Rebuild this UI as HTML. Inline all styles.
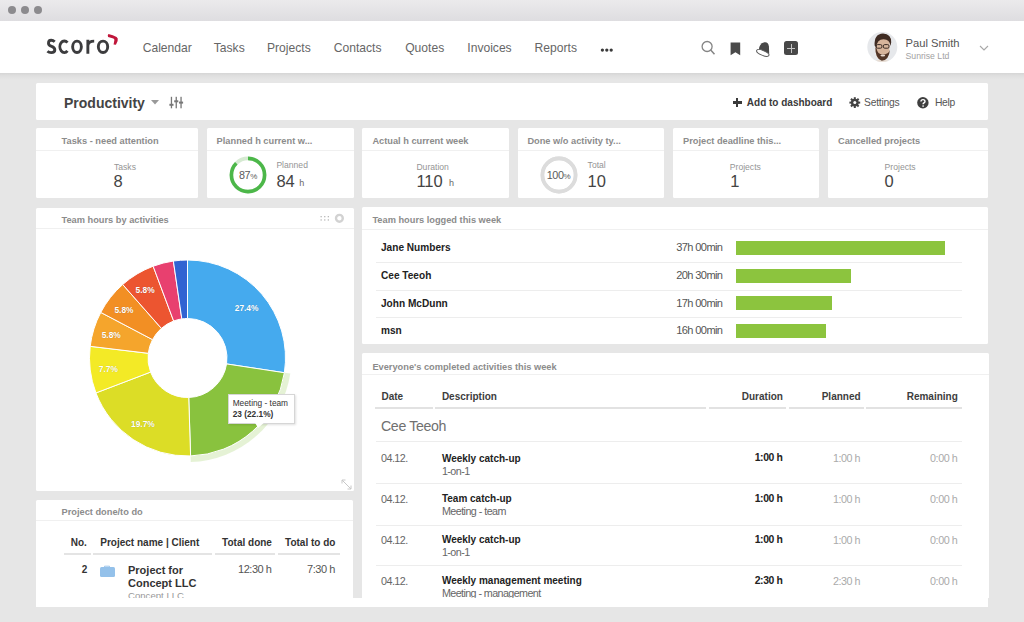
<!DOCTYPE html>
<html><head><meta charset="utf-8"><style>
html,body{margin:0;padding:0;}
body{width:1024px;height:622px;overflow:hidden;background:#e6e6e6;position:relative;font-family:"Liberation Sans",sans-serif;}
.t{position:absolute;white-space:nowrap;}
#clip{position:absolute;left:0;top:0;width:1024px;height:598px;overflow:hidden;}
</style></head><body>
<div id="clip">
<div style="position:absolute;left:0px;top:0px;width:1024px;height:21px;background:linear-gradient(#ebeaec,#dedde0);"></div>
<div style="position:absolute;left:8px;top:6px;width:8px;height:8px;background:#8c8b8e;border-radius:50%;"></div>
<div style="position:absolute;left:21px;top:6px;width:8px;height:8px;background:#8c8b8e;border-radius:50%;"></div>
<div style="position:absolute;left:34px;top:6px;width:8px;height:8px;background:#8c8b8e;border-radius:50%;"></div>
<div style="position:absolute;left:0px;top:21px;width:1024px;height:52px;background:#fff;"></div>
<div style="position:absolute;left:0px;top:73px;width:1024px;height:7px;background:linear-gradient(rgba(0,0,0,0.075),rgba(0,0,0,0.03) 40%,rgba(0,0,0,0));"></div>
<svg style="position:absolute;left:42px;top:30px" width="80" height="30" viewBox="0 0 1024 384"><g fill="none" stroke="#3c3c3e" stroke-width="37">
<path d="M163 150 Q142 131 118 131 Q83 131 83 168 Q83 197 123 210 Q164 223 164 257 Q164 290 118 290 Q89 290 70 272"/>
<path d="M326 162 A57 74 0 1 0 326 268"/>
<ellipse cx="448" cy="215" rx="56" ry="73"/>
<path d="M587 305 V125 M587 200 Q595 142 668 142"/>
<ellipse cx="781" cy="215" rx="60" ry="73"/>
</g><path d="M850 50 Q910 62 955 88 Q978 102 968 140 L946 188 L916 184 L926 132 Q930 118 913 110 L846 88 Q835 70 850 50 Z" fill="#c0163a"/></svg>
<div class="t" style="left:142.7px;top:41.96px;font-size:12.10px;line-height:12.10px;font-weight:400;color:#666;">Calendar</div>
<div class="t" style="left:213.8px;top:41.96px;font-size:12.10px;line-height:12.10px;font-weight:400;color:#666;">Tasks</div>
<div class="t" style="left:267.0px;top:41.96px;font-size:12.10px;line-height:12.10px;font-weight:400;color:#666;">Projects</div>
<div class="t" style="left:333.8px;top:41.96px;font-size:12.10px;line-height:12.10px;font-weight:400;color:#666;">Contacts</div>
<div class="t" style="left:405.2px;top:41.96px;font-size:12.10px;line-height:12.10px;font-weight:400;color:#666;">Quotes</div>
<div class="t" style="left:467.3px;top:41.96px;font-size:12.10px;line-height:12.10px;font-weight:400;color:#666;">Invoices</div>
<div class="t" style="left:534.6px;top:41.96px;font-size:12.10px;line-height:12.10px;font-weight:400;color:#666;">Reports</div>
<svg style="position:absolute;left:598px;top:45px" width="18" height="10" viewBox="0 0 18 10"><g fill="#3a3a3a"><circle cx="4.4" cy="5.1" r="1.65"/><circle cx="8.8" cy="5.1" r="1.65"/><circle cx="13.2" cy="5.1" r="1.65"/></g></svg>
<svg style="position:absolute;left:700px;top:39px" width="18" height="18" viewBox="0 0 18 18"><circle cx="7.1" cy="7.5" r="5" fill="none" stroke="#858585" stroke-width="1.3"/><line x1="10.7" y1="11.1" x2="14.5" y2="15.3" stroke="#858585" stroke-width="1.5"/></svg>
<svg style="position:absolute;left:730px;top:42px" width="11" height="14" viewBox="0 0 11 14"><path d="M0.6 0.6 H10.2 V13.2 L5.4 10.2 L0.6 13.2 Z" fill="#4a4a4a"/></svg>
<svg style="position:absolute;left:755px;top:40px" width="17" height="18" viewBox="0 0 17 18"><path d="M3.8 10 Q4.2 3.6 9.4 2.2 Q13.2 1.6 13.9 6.2 L14.2 13.6 Z" fill="#474747"/><ellipse cx="7.8" cy="12.9" rx="6.6" ry="2.4" transform="rotate(22 7.8 12.9)" fill="#fff" stroke="#5a5a5a" stroke-width="1"/></svg>
<div style="position:absolute;left:784.2px;top:41.4px;width:13.7px;height:13.6px;background:#484848;border-radius:2.5px;"></div>
<div style="position:absolute;left:786.9px;top:47.8px;width:8.1px;height:1.1px;background:#c4c4c4;"></div>
<div style="position:absolute;left:790.5px;top:44.2px;width:1.1px;height:8.4px;background:#c4c4c4;"></div>
<svg style="position:absolute;left:867px;top:32px" width="31" height="31" viewBox="0 0 31 31">
<defs><clipPath id="av"><circle cx="15.3" cy="15.1" r="15"/></clipPath></defs>
<circle cx="15.3" cy="15.1" r="15" fill="#e6e8eb"/>
<g clip-path="url(#av)">
<path d="M6 31 Q9 27 15 27.5 Q22 27.5 25 31Z" fill="#e8ddd3"/>
<path d="M8.6 12 Q8.4 4.5 15.5 4.3 Q22.8 4.5 22.6 12 L22.2 20 Q21 27.5 15 28 Q9.5 27.5 8.8 20 Z" fill="#d6b49b"/>
<path d="M7.6 13.5 Q7 2 16 1.6 Q24.5 2 24.2 10.5 L23.4 14 Q23 7.5 16.5 7.2 Q10 7.2 9.2 15.5 Z" fill="#3f2b22"/>
<path d="M8.4 15 Q8 26.5 14.8 28.8 Q22 28.3 23 17.5 Q21.8 22.5 15.5 22.6 Q10.5 22.3 9.6 16.5 Z" fill="#523628"/>
<ellipse cx="15.8" cy="23.6" rx="2.4" ry="1" fill="#eadbd0"/>
<rect x="9.3" y="12.6" width="5.6" height="3.6" rx="1.3" fill="none" stroke="#3a2c26" stroke-width="1"/>
<rect x="16.4" y="12.6" width="5.6" height="3.6" rx="1.3" fill="none" stroke="#3a2c26" stroke-width="1"/>
</g></svg>
<div class="t" style="left:905.5px;top:37.72px;font-size:11.20px;line-height:11.20px;font-weight:400;color:#555;">Paul Smith</div>
<div class="t" style="left:905.5px;top:52.04px;font-size:8.70px;line-height:8.70px;font-weight:400;color:#a2a2a2;">Sunrise Ltd</div>
<svg style="position:absolute;left:978px;top:44px" width="12" height="8" viewBox="0 0 12 8"><path d="M2 2 L6 6 L10 2" fill="none" stroke="#a8a8a8" stroke-width="1.1"/></svg>
<div style="position:absolute;left:36px;top:83px;width:952px;height:37px;background:#fff;border-radius:1.5px;"></div>
<div class="t" style="left:64.0px;top:96.35px;font-size:14.00px;line-height:14.00px;font-weight:700;color:#444;">Productivity</div>
<svg style="position:absolute;left:150px;top:99px" width="10" height="7" viewBox="0 0 10 7"><path d="M1 1 H9 L5 5.5 Z" fill="#999"/></svg>
<svg style="position:absolute;left:168px;top:96px" width="16" height="13" viewBox="0 0 16 13">
<g fill="#777"><rect x="2.8" y="0.8" width="1.3" height="11.5"/><rect x="7.6" y="0.8" width="1.3" height="11.5"/><rect x="12.4" y="0.8" width="1.3" height="11.5"/>
<rect x="1.4" y="7.8" width="4.1" height="2"/><rect x="6.2" y="4.3" width="4.1" height="2"/><rect x="11" y="5.6" width="4.1" height="2"/></g></svg>
<div style="position:absolute;left:732.5px;top:101px;width:9.3px;height:2.6px;background:#3a3a3a;"></div>
<div style="position:absolute;left:735.85px;top:97.5px;width:2.6px;height:9.3px;background:#3a3a3a;"></div>
<div class="t" style="left:746.8px;top:97.83px;font-size:10.00px;line-height:10.00px;font-weight:700;color:#3a3a3a;">Add to dashboard</div>
<svg style="position:absolute;left:849px;top:97px" width="12" height="12" viewBox="0 0 12 12"><g fill="#444">
<circle cx="5.8" cy="5.6" r="3.9"/><rect x="4.8" y="0.2" width="2" height="2.5" transform="rotate(0 5.8 5.6)"/><rect x="4.8" y="0.2" width="2" height="2.5" transform="rotate(45 5.8 5.6)"/><rect x="4.8" y="0.2" width="2" height="2.5" transform="rotate(90 5.8 5.6)"/><rect x="4.8" y="0.2" width="2" height="2.5" transform="rotate(135 5.8 5.6)"/><rect x="4.8" y="0.2" width="2" height="2.5" transform="rotate(180 5.8 5.6)"/><rect x="4.8" y="0.2" width="2" height="2.5" transform="rotate(225 5.8 5.6)"/><rect x="4.8" y="0.2" width="2" height="2.5" transform="rotate(270 5.8 5.6)"/><rect x="4.8" y="0.2" width="2" height="2.5" transform="rotate(315 5.8 5.6)"/></g><circle cx="5.8" cy="5.6" r="1.5" fill="#fff"/></svg>
<div class="t" style="left:864.1px;top:97.78px;font-size:10.30px;line-height:10.30px;font-weight:400;color:#555;letter-spacing:-0.25px;">Settings</div>
<svg style="position:absolute;left:917px;top:96.5px" width="12" height="12" viewBox="0 0 12 12"><circle cx="5.9" cy="5.8" r="5.7" fill="#3f3f3f"/><path d="M4 4.6 Q4 2.6 6 2.6 Q8 2.6 8 4.4 Q8 5.5 6.8 6 Q6.1 6.3 6.1 7.2" fill="none" stroke="#fff" stroke-width="1.4"/><circle cx="6.1" cy="9" r="0.85" fill="#fff"/></svg>
<div class="t" style="left:934.9px;top:97.78px;font-size:10.30px;line-height:10.30px;font-weight:400;color:#555;letter-spacing:-0.25px;">Help</div>
<div style="position:absolute;left:36px;top:128px;width:162px;height:70px;background:#fff;border-radius:1.5px;"></div>
<div style="position:absolute;left:36px;top:149.5px;width:162px;height:1px;background:#f0f0f0;"></div>
<div style="position:absolute;left:207px;top:128px;width:147px;height:70px;background:#fff;border-radius:1.5px;"></div>
<div style="position:absolute;left:207px;top:149.5px;width:147px;height:1px;background:#f0f0f0;"></div>
<div style="position:absolute;left:362px;top:128px;width:147px;height:70px;background:#fff;border-radius:1.5px;"></div>
<div style="position:absolute;left:362px;top:149.5px;width:147px;height:1px;background:#f0f0f0;"></div>
<div style="position:absolute;left:518px;top:128px;width:146px;height:70px;background:#fff;border-radius:1.5px;"></div>
<div style="position:absolute;left:518px;top:149.5px;width:146px;height:1px;background:#f0f0f0;"></div>
<div style="position:absolute;left:673px;top:128px;width:146px;height:70px;background:#fff;border-radius:1.5px;"></div>
<div style="position:absolute;left:673px;top:149.5px;width:146px;height:1px;background:#f0f0f0;"></div>
<div style="position:absolute;left:828px;top:128px;width:160px;height:70px;background:#fff;border-radius:1.5px;"></div>
<div style="position:absolute;left:828px;top:149.5px;width:160px;height:1px;background:#f0f0f0;"></div>
<div class="t" style="left:61.6px;top:137.17px;font-size:9.25px;line-height:9.25px;font-weight:700;color:#8c8c8c;">Tasks - need attention</div>
<div class="t" style="left:216.6px;top:137.17px;font-size:9.25px;line-height:9.25px;font-weight:700;color:#8c8c8c;">Planned h current w...</div>
<div class="t" style="left:372.4px;top:137.17px;font-size:9.25px;line-height:9.25px;font-weight:700;color:#8c8c8c;">Actual h current week</div>
<div class="t" style="left:527.4px;top:137.17px;font-size:9.25px;line-height:9.25px;font-weight:700;color:#8c8c8c;">Done w/o activity ty...</div>
<div class="t" style="left:683.0px;top:137.17px;font-size:9.25px;line-height:9.25px;font-weight:700;color:#8c8c8c;">Project deadline this...</div>
<div class="t" style="left:838.0px;top:137.17px;font-size:9.25px;line-height:9.25px;font-weight:700;color:#8c8c8c;">Cancelled projects</div>
<div class="t" style="left:114.0px;top:162.92px;font-size:8.60px;line-height:8.60px;font-weight:400;color:#959595;">Tasks</div>
<div class="t" style="left:113.5px;top:172.83px;font-size:16.50px;line-height:16.50px;font-weight:400;color:#444;">8</div>
<div class="t" style="left:276.4px;top:161.32px;font-size:8.60px;line-height:8.60px;font-weight:400;color:#959595;">Planned</div>
<div class="t" style="left:276.4px;top:172.53px;font-size:16.50px;line-height:16.50px;font-weight:400;color:#444;">84</div>
<div class="t" style="left:299.3px;top:178.88px;font-size:9.00px;line-height:9.00px;font-weight:400;color:#666;">h</div>
<div class="t" style="left:416.4px;top:162.82px;font-size:8.60px;line-height:8.60px;font-weight:400;color:#959595;">Duration</div>
<div class="t" style="left:416.4px;top:173.03px;font-size:16.50px;line-height:16.50px;font-weight:400;color:#444;">110</div>
<div class="t" style="left:449.0px;top:179.38px;font-size:9.00px;line-height:9.00px;font-weight:400;color:#666;">h</div>
<div class="t" style="left:587.6px;top:161.32px;font-size:8.60px;line-height:8.60px;font-weight:400;color:#959595;">Total</div>
<div class="t" style="left:587.6px;top:172.53px;font-size:16.50px;line-height:16.50px;font-weight:400;color:#444;">10</div>
<div class="t" style="left:729.8px;top:162.82px;font-size:8.60px;line-height:8.60px;font-weight:400;color:#959595;">Projects</div>
<div class="t" style="left:730.3px;top:173.03px;font-size:16.50px;line-height:16.50px;font-weight:400;color:#444;">1</div>
<div class="t" style="left:884.6px;top:162.82px;font-size:8.60px;line-height:8.60px;font-weight:400;color:#959595;">Projects</div>
<div class="t" style="left:884.6px;top:173.03px;font-size:16.50px;line-height:16.50px;font-weight:400;color:#444;">0</div>
<svg style="position:absolute;left:228.2px;top:154.5px" width="40" height="40" viewBox="0 0 40 40"><circle cx="20" cy="20" r="16.6" fill="none" stroke="#d6ead2" stroke-width="3.6"/><circle cx="20" cy="20" r="16.6" fill="none" stroke="#4cb749" stroke-width="3.6" stroke-dasharray="90.74 104.30" transform="rotate(-90 20 20)"/></svg>
<svg style="position:absolute;left:538.5px;top:154.5px" width="40" height="40" viewBox="0 0 40 40"><circle cx="20" cy="20" r="16.6" fill="none" stroke="#dcdcdc" stroke-width="3.6"/><circle cx="20" cy="20" r="16.6" fill="none" stroke="#dcdcdc" stroke-width="3.6" stroke-dasharray="104.30 104.30" transform="rotate(-90 20 20)"/></svg>
<div class="t" style="left:228px;top:168.7px;width:40px;text-align:center;font-size:10.8px;line-height:13px;color:#5a5a5a;letter-spacing:-0.3px;">87<span style="font-size:8px">%</span></div>
<div class="t" style="left:538.5px;top:168.7px;width:40px;text-align:center;font-size:10.8px;line-height:13px;color:#5a5a5a;letter-spacing:-0.4px;">100<span style="font-size:8px">%</span></div>
<div style="position:absolute;left:36px;top:207.5px;width:317.5px;height:283.5px;background:#fff;border-radius:1.5px;"></div>
<div style="position:absolute;left:36px;top:228px;width:317.5px;height:1px;background:#f0f0f0;"></div>
<div class="t" style="left:61.5px;top:216.07px;font-size:9.25px;line-height:9.25px;font-weight:700;color:#8c8c8c;">Team hours by activities</div>
<svg style="position:absolute;left:319px;top:215px" width="26" height="8" viewBox="0 0 26 8"><g fill="#b8b8b8"><rect x="1.5" y="1.0" width="1.3" height="1.3"/><rect x="1.5" y="4.3" width="1.3" height="1.3"/><rect x="5.1" y="1.0" width="1.3" height="1.3"/><rect x="5.1" y="4.3" width="1.3" height="1.3"/><rect x="8.7" y="1.0" width="1.3" height="1.3"/><rect x="8.7" y="4.3" width="1.3" height="1.3"/></g></svg>
<svg style="position:absolute;left:334px;top:213px" width="11" height="11" viewBox="0 0 11 11"><circle cx="5.4" cy="5.3" r="3.4" fill="none" stroke="#d2d2d2" stroke-width="2.4"/></svg>
<svg style="position:absolute;left:340px;top:478px" width="13" height="13" viewBox="0 0 13 13"><path d="M2 2 L11 11 M2 2 L2 5.5 M2 2 L5.5 2 M11 11 L11 7.5 M11 11 L7.5 11" fill="none" stroke="#c8c8c8" stroke-width="1"/></svg>
<svg style="position:absolute;left:80px;top:250px" width="220" height="220" viewBox="0 0 220 220"><path d="M107.50 10.00 A98.0 98.0 0 0 1 204.39 122.72 L146.55 113.93 A39.5 39.5 0 0 0 107.50 68.50 Z" fill="#45aaee" stroke="#fff" stroke-width="1" stroke-linejoin="round"/><path d="M204.39 122.72 L210.32 123.62 A104.0 104.0 0 0 1 110.77 211.95 L110.58 205.95 Z" fill="#89c23e" fill-opacity="0.22"/><path d="M204.39 122.72 A98.0 98.0 0 0 1 110.58 205.95 L108.74 147.48 A39.5 39.5 0 0 0 146.55 113.93 Z" fill="#89c23e" stroke="#fff" stroke-width="1" stroke-linejoin="round"/><path d="M110.58 205.95 A98.0 98.0 0 0 1 15.94 142.93 L70.59 122.08 A39.5 39.5 0 0 0 108.74 147.48 Z" fill="#dcdd26" stroke="#fff" stroke-width="1" stroke-linejoin="round"/><path d="M15.94 142.93 A98.0 98.0 0 0 1 10.20 96.33 L68.28 103.30 A39.5 39.5 0 0 0 70.59 122.08 Z" fill="#f3ea26" stroke="#fff" stroke-width="1" stroke-linejoin="round"/><path d="M10.20 96.33 A98.0 98.0 0 0 1 20.75 62.42 L72.53 89.63 A39.5 39.5 0 0 0 68.28 103.30 Z" fill="#f5a52c" stroke="#fff" stroke-width="1" stroke-linejoin="round"/><path d="M20.75 62.42 A98.0 98.0 0 0 1 42.69 34.49 L81.38 78.37 A39.5 39.5 0 0 0 72.53 89.63 Z" fill="#f28f24" stroke="#fff" stroke-width="1" stroke-linejoin="round"/><path d="M42.69 34.49 A98.0 98.0 0 0 1 73.15 16.22 L93.65 71.01 A39.5 39.5 0 0 0 81.38 78.37 Z" fill="#ec5530" stroke="#fff" stroke-width="1" stroke-linejoin="round"/><path d="M73.15 16.22 A98.0 98.0 0 0 1 93.39 11.02 L101.81 68.91 A39.5 39.5 0 0 0 93.65 71.01 Z" fill="#e8406f" stroke="#fff" stroke-width="1" stroke-linejoin="round"/><path d="M93.39 11.02 A98.0 98.0 0 0 1 107.50 10.00 L107.50 68.50 A39.5 39.5 0 0 0 101.81 68.91 Z" fill="#3063d2" stroke="#fff" stroke-width="1" stroke-linejoin="round"/></svg>
<div class="t" style="left:46.6px;width:400px;text-align:center;top:304.19px;font-size:8.40px;line-height:8.40px;font-weight:700;color:#fff;text-shadow:0 0 1px rgba(0,0,0,0.25);">27.4%</div>
<div class="t" style="left:-57.1px;width:400px;text-align:center;top:420.49px;font-size:8.40px;line-height:8.40px;font-weight:700;color:#fff;text-shadow:0 0 1px rgba(0,0,0,0.25);">19.7%</div>
<div class="t" style="left:-91.6px;width:400px;text-align:center;top:364.69px;font-size:8.40px;line-height:8.40px;font-weight:700;color:#fff;text-shadow:0 0 1px rgba(0,0,0,0.25);">7.7%</div>
<div class="t" style="left:-88.8px;width:400px;text-align:center;top:330.79px;font-size:8.40px;line-height:8.40px;font-weight:700;color:#fff;text-shadow:0 0 1px rgba(0,0,0,0.25);">5.8%</div>
<div class="t" style="left:-76.0px;width:400px;text-align:center;top:305.59px;font-size:8.40px;line-height:8.40px;font-weight:700;color:#fff;text-shadow:0 0 1px rgba(0,0,0,0.25);">5.8%</div>
<div class="t" style="left:-54.9px;width:400px;text-align:center;top:285.79px;font-size:8.40px;line-height:8.40px;font-weight:700;color:#fff;text-shadow:0 0 1px rgba(0,0,0,0.25);">5.8%</div>
<div style="position:absolute;left:228px;top:393.8px;width:64.7px;height:28.2px;background:#fff;border:1px solid #d6d6d6;box-shadow:1px 1px 2px rgba(0,0,0,0.12);"></div>
<svg style="position:absolute;left:252px;top:421px" width="20" height="10" viewBox="0 0 20 10"><path d="M2 0 L6 7 L14 0 Z" fill="#fff"/></svg>
<div class="t" style="left:232.7px;top:399.27px;font-size:8.30px;line-height:8.30px;font-weight:400;color:#333;">Meeting - team</div>
<div class="t" style="left:232.7px;top:409.87px;font-size:8.30px;line-height:8.30px;font-weight:700;color:#333;">23 (22.1%)</div>
<div style="position:absolute;left:36px;top:499.5px;width:316.5px;height:110px;background:#fff;border-radius:1.5px;"></div>
<div style="position:absolute;left:36px;top:520.3px;width:316.5px;height:1px;background:#f0f0f0;"></div>
<div class="t" style="left:61.5px;top:508.27px;font-size:9.25px;line-height:9.25px;font-weight:700;color:#8c8c8c;">Project done/to do</div>
<div class="t" style="left:-313.2px;width:400px;text-align:right;top:538.13px;font-size:10.00px;line-height:10.00px;font-weight:700;color:#333;">No.</div>
<div class="t" style="left:100.3px;top:538.13px;font-size:10.00px;line-height:10.00px;font-weight:700;color:#333;">Project name | Client</div>
<div class="t" style="left:-128.1px;width:400px;text-align:right;top:538.13px;font-size:10.00px;line-height:10.00px;font-weight:700;color:#333;">Total done</div>
<div class="t" style="left:-64.6px;width:400px;text-align:right;top:538.13px;font-size:10.00px;line-height:10.00px;font-weight:700;color:#333;">Total to do</div>
<div style="position:absolute;left:63.7px;top:553px;width:27.200000000000003px;height:2px;background:#e4e4e4;"></div>
<div style="position:absolute;left:93.4px;top:553px;width:118.6px;height:2px;background:#e4e4e4;"></div>
<div style="position:absolute;left:214.8px;top:553px;width:60.5px;height:2px;background:#e4e4e4;"></div>
<div style="position:absolute;left:278px;top:553px;width:61.5px;height:2px;background:#e4e4e4;"></div>
<div class="t" style="left:-312.6px;width:400px;text-align:right;top:565.13px;font-size:10.00px;line-height:10.00px;font-weight:700;color:#333;">2</div>
<svg style="position:absolute;left:99px;top:565px" width="17" height="13" viewBox="0 0 17 13"><path d="M5.5 2.2 V1.2 H10.5 V2.2" fill="none" stroke="#9cc6ec" stroke-width="1"/><rect x="1" y="2" width="15" height="10" rx="1.5" fill="#94c1ea"/></svg>
<div class="t" style="left:128.0px;top:564.79px;font-size:11.00px;line-height:11.00px;font-weight:700;color:#333;">Project for</div>
<div class="t" style="left:128.0px;top:578.09px;font-size:11.00px;line-height:11.00px;font-weight:700;color:#333;">Concept LLC</div>
<div class="t" style="left:128.0px;top:591.37px;font-size:9.60px;line-height:9.60px;font-weight:400;color:#999;">Concept LLC</div>
<div class="t" style="left:-128.6px;width:400px;text-align:right;top:564.39px;font-size:11.00px;line-height:11.00px;font-weight:400;color:#555;letter-spacing:-0.477px;">12:30 h</div>
<div class="t" style="left:-65.1px;width:400px;text-align:right;top:564.39px;font-size:11.00px;line-height:11.00px;font-weight:400;color:#555;letter-spacing:-0.463px;">7:30 h</div>
<div style="position:absolute;left:361.5px;top:207.3px;width:626.5px;height:137.2px;background:#fff;border-radius:1.5px;"></div>
<div style="position:absolute;left:361.5px;top:228.5px;width:626.5px;height:1px;background:#f0f0f0;"></div>
<div class="t" style="left:372.4px;top:216.27px;font-size:9.25px;line-height:9.25px;font-weight:700;color:#8c8c8c;">Team hours logged this week</div>
<div class="t" style="left:381.0px;top:243.05px;font-size:10.10px;line-height:10.10px;font-weight:700;color:#222;">Jane Numbers</div>
<div class="t" style="left:322.4px;width:400px;text-align:right;top:242.21px;font-size:11.09px;line-height:11.09px;font-weight:400;color:#555;letter-spacing:-0.616px;">37h 00min</div>
<div style="position:absolute;left:735.7px;top:241px;width:209.19999999999993px;height:14px;background:#8cc43e;"></div>
<div class="t" style="left:381.0px;top:271.25px;font-size:10.10px;line-height:10.10px;font-weight:700;color:#222;">Cee Teeoh</div>
<div class="t" style="left:322.4px;width:400px;text-align:right;top:270.41px;font-size:11.09px;line-height:11.09px;font-weight:400;color:#555;letter-spacing:-0.616px;">20h 30min</div>
<div style="position:absolute;left:735.7px;top:268.8px;width:115.19999999999993px;height:14px;background:#8cc43e;"></div>
<div class="t" style="left:381.0px;top:298.75px;font-size:10.10px;line-height:10.10px;font-weight:700;color:#222;">John McDunn</div>
<div class="t" style="left:322.4px;width:400px;text-align:right;top:297.91px;font-size:11.09px;line-height:11.09px;font-weight:400;color:#555;letter-spacing:-0.616px;">17h 00min</div>
<div style="position:absolute;left:735.7px;top:296.4px;width:95.89999999999998px;height:14px;background:#8cc43e;"></div>
<div class="t" style="left:381.0px;top:326.05px;font-size:10.10px;line-height:10.10px;font-weight:700;color:#222;">msn</div>
<div class="t" style="left:322.4px;width:400px;text-align:right;top:325.21px;font-size:11.09px;line-height:11.09px;font-weight:400;color:#555;letter-spacing:-0.616px;">16h 00min</div>
<div style="position:absolute;left:735.7px;top:324px;width:90.29999999999995px;height:14px;background:#8cc43e;"></div>
<div style="position:absolute;left:375.5px;top:262px;width:586.5px;height:1px;background:#ededed;"></div>
<div style="position:absolute;left:375.5px;top:289.5px;width:586.5px;height:1px;background:#ededed;"></div>
<div style="position:absolute;left:375.5px;top:317.2px;width:586.5px;height:1px;background:#ededed;"></div>
<div style="position:absolute;left:361.5px;top:353.3px;width:627px;height:260px;background:#fff;border-radius:1.5px;"></div>
<div style="position:absolute;left:361.5px;top:374px;width:627px;height:1px;background:#f0f0f0;"></div>
<div class="t" style="left:372.4px;top:362.77px;font-size:9.25px;line-height:9.25px;font-weight:700;color:#8c8c8c;">Everyone's completed activities this week</div>
<div class="t" style="left:381.5px;top:391.84px;font-size:10.00px;line-height:10.00px;font-weight:700;color:#3d3d3d;">Date</div>
<div class="t" style="left:441.9px;top:391.84px;font-size:10.00px;line-height:10.00px;font-weight:700;color:#3d3d3d;">Description</div>
<div class="t" style="left:382.9px;width:400px;text-align:right;top:391.84px;font-size:10.00px;line-height:10.00px;font-weight:700;color:#3d3d3d;">Duration</div>
<div class="t" style="left:460.6px;width:400px;text-align:right;top:391.84px;font-size:10.00px;line-height:10.00px;font-weight:700;color:#3d3d3d;">Planned</div>
<div class="t" style="left:557.8px;width:400px;text-align:right;top:391.84px;font-size:10.00px;line-height:10.00px;font-weight:700;color:#3d3d3d;">Remaining</div>
<div style="position:absolute;left:375px;top:406.8px;width:57.69999999999999px;height:1.8px;background:#e2e2e2;"></div>
<div style="position:absolute;left:435px;top:406.8px;width:270.9px;height:1.8px;background:#e2e2e2;"></div>
<div style="position:absolute;left:708.8px;top:406.8px;width:77.60000000000002px;height:1.8px;background:#e2e2e2;"></div>
<div style="position:absolute;left:789.4px;top:406.8px;width:74.60000000000002px;height:1.8px;background:#e2e2e2;"></div>
<div style="position:absolute;left:866.4px;top:406.8px;width:95.20000000000005px;height:1.8px;background:#e2e2e2;"></div>
<div class="t" style="left:381.0px;top:419.00px;font-size:14.18px;line-height:14.18px;font-weight:400;color:#707070;letter-spacing:-0.361px;">Cee Teeoh</div>
<div style="position:absolute;left:375.5px;top:441.3px;width:586.5px;height:1px;background:#ededed;"></div>
<div style="position:absolute;left:375.5px;top:483px;width:586.5px;height:1px;background:#ededed;"></div>
<div style="position:absolute;left:375.5px;top:524.8px;width:586.5px;height:1px;background:#ededed;"></div>
<div style="position:absolute;left:375.5px;top:565px;width:586.5px;height:1px;background:#ededed;"></div>
<div class="t" style="left:381.0px;top:453.20px;font-size:10.75px;line-height:10.75px;font-weight:400;color:#666;letter-spacing:-0.534px;">04.12.</div>
<div class="t" style="left:441.9px;top:453.84px;font-size:10.00px;line-height:10.00px;font-weight:700;color:#222;">Weekly catch-up</div>
<div class="t" style="left:441.9px;top:465.50px;font-size:10.75px;line-height:10.75px;font-weight:400;color:#666;letter-spacing:-0.555px;">1-on-1</div>
<div class="t" style="left:382.5px;width:400px;text-align:right;top:453.48px;font-size:10.42px;line-height:10.42px;font-weight:700;color:#222;letter-spacing:-0.372px;">1:00 h</div>
<div class="t" style="left:460.1px;width:400px;text-align:right;top:453.17px;font-size:10.78px;line-height:10.78px;font-weight:400;color:#aaa;letter-spacing:-0.454px;">1:00 h</div>
<div class="t" style="left:557.3px;width:400px;text-align:right;top:453.17px;font-size:10.78px;line-height:10.78px;font-weight:400;color:#aaa;letter-spacing:-0.454px;">0:00 h</div>
<div class="t" style="left:381.0px;top:493.70px;font-size:10.75px;line-height:10.75px;font-weight:400;color:#666;letter-spacing:-0.534px;">04.12.</div>
<div class="t" style="left:441.9px;top:494.34px;font-size:10.00px;line-height:10.00px;font-weight:700;color:#222;">Team catch-up</div>
<div class="t" style="left:441.9px;top:506.00px;font-size:10.75px;line-height:10.75px;font-weight:400;color:#666;letter-spacing:-0.549px;">Meeting - team</div>
<div class="t" style="left:382.5px;width:400px;text-align:right;top:493.98px;font-size:10.42px;line-height:10.42px;font-weight:700;color:#222;letter-spacing:-0.372px;">1:00 h</div>
<div class="t" style="left:460.1px;width:400px;text-align:right;top:493.67px;font-size:10.78px;line-height:10.78px;font-weight:400;color:#aaa;letter-spacing:-0.454px;">1:00 h</div>
<div class="t" style="left:557.3px;width:400px;text-align:right;top:493.67px;font-size:10.78px;line-height:10.78px;font-weight:400;color:#aaa;letter-spacing:-0.454px;">0:00 h</div>
<div class="t" style="left:381.0px;top:534.70px;font-size:10.75px;line-height:10.75px;font-weight:400;color:#666;letter-spacing:-0.534px;">04.12.</div>
<div class="t" style="left:441.9px;top:535.33px;font-size:10.00px;line-height:10.00px;font-weight:700;color:#222;">Weekly catch-up</div>
<div class="t" style="left:441.9px;top:547.00px;font-size:10.75px;line-height:10.75px;font-weight:400;color:#666;letter-spacing:-0.555px;">1-on-1</div>
<div class="t" style="left:382.5px;width:400px;text-align:right;top:534.98px;font-size:10.42px;line-height:10.42px;font-weight:700;color:#222;letter-spacing:-0.372px;">1:00 h</div>
<div class="t" style="left:460.1px;width:400px;text-align:right;top:534.67px;font-size:10.78px;line-height:10.78px;font-weight:400;color:#aaa;letter-spacing:-0.454px;">1:00 h</div>
<div class="t" style="left:557.3px;width:400px;text-align:right;top:534.67px;font-size:10.78px;line-height:10.78px;font-weight:400;color:#aaa;letter-spacing:-0.454px;">0:00 h</div>
<div class="t" style="left:381.0px;top:575.80px;font-size:10.75px;line-height:10.75px;font-weight:400;color:#666;letter-spacing:-0.534px;">04.12.</div>
<div class="t" style="left:441.9px;top:576.43px;font-size:10.00px;line-height:10.00px;font-weight:700;color:#222;">Weekly management meeting</div>
<div class="t" style="left:441.9px;top:588.10px;font-size:10.75px;line-height:10.75px;font-weight:400;color:#666;letter-spacing:-0.592px;">Meeting - management</div>
<div class="t" style="left:382.5px;width:400px;text-align:right;top:576.08px;font-size:10.42px;line-height:10.42px;font-weight:700;color:#222;letter-spacing:-0.372px;">2:30 h</div>
<div class="t" style="left:460.1px;width:400px;text-align:right;top:575.77px;font-size:10.78px;line-height:10.78px;font-weight:400;color:#aaa;letter-spacing:-0.454px;">2:30 h</div>
<div class="t" style="left:557.3px;width:400px;text-align:right;top:575.77px;font-size:10.78px;line-height:10.78px;font-weight:400;color:#aaa;letter-spacing:-0.454px;">0:00 h</div>
</div>
<div style="position:absolute;left:36px;top:598px;width:952px;height:8.8px;background:#fff;"></div>
</body></html>
